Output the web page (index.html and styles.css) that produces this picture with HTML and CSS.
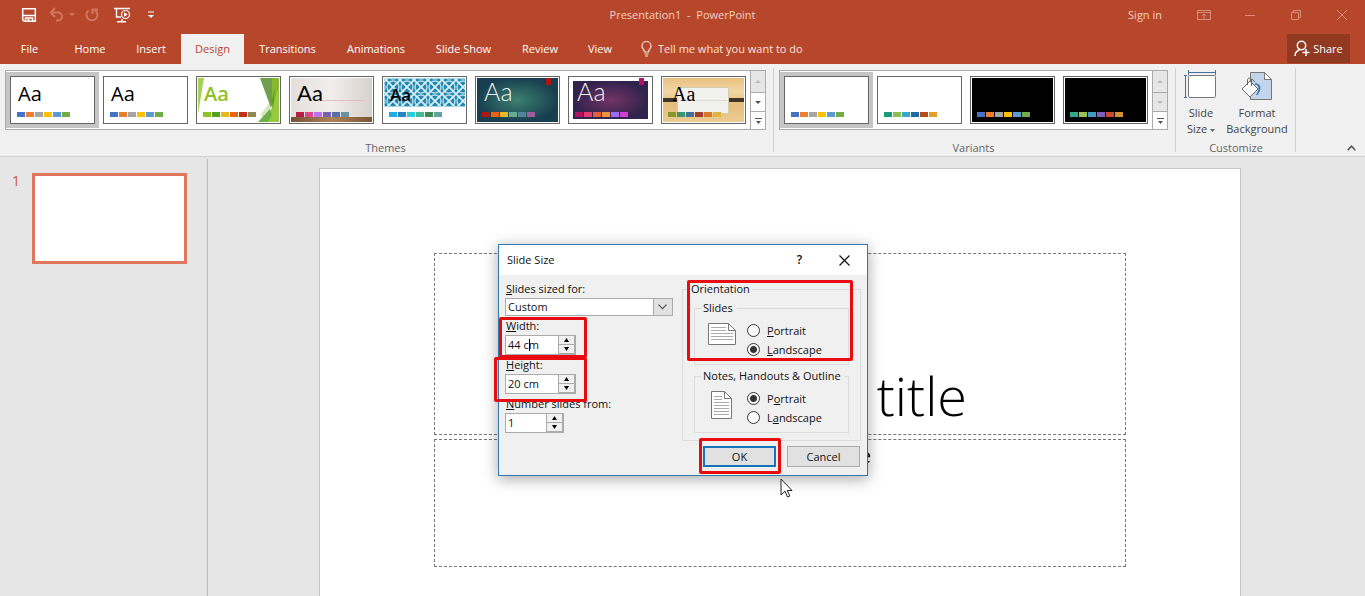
FILE: index.html
```html
<!DOCTYPE html>
<html lang="en">
<head>
<meta charset="utf-8">
<title>Presentation1 - PowerPoint</title>
<link rel="stylesheet" href="styles.css">
</head>
<body>
<header class="titlebar">
  <div class="quick">
    <button class="bar-btn" aria-label="Save"><svg width="16" height="16" viewBox="0 0 16 16"><path d="M1.7 1.7h12.6v12.6H3.2l-1.5-1.5z" fill="none" stroke="#fff" stroke-width="1.5"/><path d="M2 8.500h12M4.500 14v-3h7v3" fill="none" stroke="#fff" stroke-width="1.500"/><path d="M6.500 12h2v2.500h-2z" fill="#fff"/></svg></button>
    <button class="bar-btn" aria-label="Undo"><svg width="26" height="16" viewBox="0 0 26 16"><path d="M2 5.500h7a4 4 0 0 1 0 8H7M6 1 1.800 5.500 6 10" fill="none" stroke="#d3775f" stroke-width="2"/><path d="M20 6h6l-3 3z" fill="#d3775f"/></svg></button>
    <button class="bar-btn" aria-label="Repeat"><svg width="16" height="16" viewBox="0 0 16 16"><path d="M4.500 3.500A5.500 5.500 0 1 0 11 3.200M8.500 7V2.500H14" fill="none" stroke="#d3775f" stroke-width="2"/></svg></button>
    <button class="bar-btn" aria-label="Start from beginning"><svg width="18" height="16" viewBox="0 0 18 16"><path d="M0 1.500h16M2.500 2v8H7M8 12v2.500M3 14.800h9" fill="none" stroke="#fff" stroke-width="1.400"/><circle cx="11.500" cy="7.500" r="4" fill="#b7472a" stroke="#fff" stroke-width="1.200"/><path d="M10 5.200v4.600l3.700-2.300z" fill="#fff"/></svg></button>
    <button class="bar-btn" aria-label="Customize toolbar"><svg width="6" height="8" viewBox="0 0 6 8"><path d="M0 1h6" stroke="#fff"/><path d="M0 4h6L3 7z" fill="#fff"/></svg></button>
  </div>
  <div class="doc-title">Presentation1&nbsp; -&nbsp; PowerPoint</div>
  <div class="window-tools">
    <button class="bar-btn signin">Sign in</button>
    <button class="bar-btn win" aria-label="Ribbon display options"><svg width="14" height="12" viewBox="0 0 14 12"><path d="M.5 1.500h13v9H.5zM.5 3.500h13M7 10V5M4.800 7 7 5l2.200 2" fill="none" stroke="#d98e79"/></svg></button>
    <button class="bar-btn win" aria-label="Minimize"><svg width="12" height="12" viewBox="0 0 12 12"><path d="M1 6.500h10" stroke="#d98e79"/></svg></button>
    <button class="bar-btn win" aria-label="Restore"><svg width="12" height="12" viewBox="0 0 12 12"><path d="M1.500 3.500h7v7h-7zM3.500 3V1.500h7v7H9" fill="none" stroke="#d98e79"/></svg></button>
    <button class="bar-btn win" aria-label="Close"><svg width="12" height="12" viewBox="0 0 12 12"><path d="m1 1 10 10M11 1 1 11" stroke="#d98e79"/></svg></button>
  </div>
</header>
<nav class="tabs">
  <button class="tab file">File</button>
  <button class="tab">Home</button>
  <button class="tab">Insert</button>
  <button class="tab active">Design</button>
  <button class="tab">Transitions</button>
  <button class="tab">Animations</button>
  <button class="tab">Slide Show</button>
  <button class="tab">Review</button>
  <button class="tab">View</button>
  <button class="tab tell"><svg width="11" height="16" viewBox="0 0 11 16"><path d="M3.500 11C3.500 8.500 1 8 1 5a4.500 4.500 0 0 1 9 0c0 3-2.500 3.500-2.500 6zM3.500 13h4M4 15h3" fill="none" stroke="#fbe3dc" stroke-width="1.200"/></svg>Tell me what you want to do</button>
  <button class="share"><svg width="16" height="17" viewBox="0 0 16 17"><circle cx="7.500" cy="5.500" r="4.200" fill="none" stroke="#fff" stroke-width="1.500"/><path d="M1 16c0-3.500 2-5.500 5-6.500M12 9v7M8.500 12.500h7" fill="none" stroke="#fff" stroke-width="1.500"/></svg>Share</button>
</nav>

<section class="ribbon">
  <div class="group">
    <div class="gallery">
      <button class="item selected" aria-label="Office Theme"><svg class="thumb" viewBox="0 0 85 48"><rect class="frame" x=".5" y=".5" width="84" height="47"/><text class="aa" x="8" y="25">Aa</text><path fill="#4472c4" d="M7 36h8v5H7z"/><path fill="#ed7d31" d="M16 36h8v5h-8z"/><path fill="#a5a5a5" d="M25 36h8v5h-8z"/><path fill="#ffc000" d="M34 36h8v5h-8z"/><path fill="#5b9bd5" d="M43 36h8v5h-8z"/><path fill="#70ad47" d="M52 36h8v5h-8z"/></svg></button>
      <button class="item" aria-label="Office Theme 2"><svg class="thumb" viewBox="0 0 85 48"><rect class="frame" x=".5" y=".5" width="84" height="47"/><text class="aa" x="8" y="25">Aa</text><path fill="#4472c4" d="M7 36h8v5H7z"/><path fill="#ed7d31" d="M16 36h8v5h-8z"/><path fill="#a5a5a5" d="M25 36h8v5h-8z"/><path fill="#ffc000" d="M34 36h8v5h-8z"/><path fill="#5b9bd5" d="M43 36h8v5h-8z"/><path fill="#70ad47" d="M52 36h8v5h-8z"/></svg></button>
      <button class="item" aria-label="Facet"><svg class="thumb" viewBox="0 0 85 48"><rect class="frame" x=".5" y=".5" width="84" height="47"/><path fill="#a5cf57" d="M2 2h6L2 38z"/><path fill="#d5e6b8" d="m75 25-10 13 3 8 6-6z"/><path fill="#6f9f4d" d="M64 2h13l3 16-5 14z"/><path fill="#86b92f" d="M76 2h7v24l-7 6z"/><path fill="#99c93c" d="M83 10v36H66l10-14z"/><path fill="#6db04b" d="m62 46 12-13 2 6-4 7z"/><path fill="#579b2f" d="m76 24 3-12-2 22z"/><text class="aa strong" fill="#90c226" x="8" y="25">Aa</text><path fill="#90c226" d="M7 36h8v5H7z"/><path fill="#54a021" d="M16 36h8v5h-8z"/><path fill="#e6b91e" d="M25 36h8v5h-8z"/><path fill="#e76618" d="M34 36h8v5h-8z"/><path fill="#c42f1a" d="M43 36h8v5h-8z"/><path fill="#918655" d="M52 36h8v5h-8z"/></svg></button>
      <button class="item" aria-label="Gallery"><svg class="thumb" viewBox="0 0 85 48"><defs><linearGradient id="wall"><stop stop-color="#e5dfdc"/><stop offset=".5" stop-color="#f1eeec"/><stop offset="1" stop-color="#d8d0cc"/></linearGradient><linearGradient id="floor"><stop stop-color="#765134"/><stop offset=".5" stop-color="#ad8355"/><stop offset="1" stop-color="#795636"/></linearGradient></defs><rect class="frame" x=".5" y=".5" width="84" height="47"/><path fill="url(#wall)" d="M2 2h81v39H2z"/><path fill="url(#floor)" d="M2 41h81v5H2z"/><path stroke="#e4bfc4" d="M31 24.500h45"/><text class="aa lato" x="8" y="25">Aa</text><path fill="#b71e42" d="M7 36h8v5H7z"/><path fill="#de478e" d="M16 36h8v5h-8z"/><path fill="#bc72f0" d="M25 36h8v5h-8z"/><path fill="#795faf" d="M34 36h8v5h-8z"/><path fill="#586ea6" d="M43 36h8v5h-8z"/><path fill="#6892a0" d="M52 36h8v5h-8z"/></svg></button>
      <button class="item" aria-label="Integral"><svg class="thumb" viewBox="0 0 85 48"><defs><pattern id="rings" width="14" height="14" patternUnits="userSpaceOnUse" x="4" y="4"><path fill="#1f87b1" d="M0 0h14v14H0z"/><circle cx="7" cy="7" r="6" fill="none" stroke="#b5dcea" stroke-width="1.500"/><path fill="none" stroke="#d8eef5" stroke-width="1.800" d="m0 0 14 14M14 0 0 14"/></pattern></defs><rect class="frame" x=".5" y=".5" width="84" height="47"/><path fill="url(#rings)" d="M2 2h81v29H2z"/><text class="aa narrow-aa" x="8" y="25">Aa</text><path fill="#1cade4" d="M7 36h8v5H7z"/><path fill="#2683c6" d="M16 36h8v5h-8z"/><path fill="#27ced7" d="M25 36h8v5h-8z"/><path fill="#42ba97" d="M34 36h8v5h-8z"/><path fill="#3e8853" d="M43 36h8v5h-8z"/><path fill="#62a39f" d="M52 36h8v5h-8z"/></svg></button>
      <button class="item" aria-label="Ion"><svg class="thumb" viewBox="0 0 85 48"><defs><radialGradient id="teal"><stop stop-color="#3d806f"/><stop offset="1" stop-color="#183f50"/></radialGradient></defs><rect class="frame" x=".5" y=".5" width="84" height="47"/><path fill="url(#teal)" d="M2 2h81v44H2z"/><path fill="#b01513" d="M71 2h5v7h-5z"/><text class="aa lato white" x="9" y="25">Aa</text><path fill="#b01513" d="M7 36h8v5H7z"/><path fill="#ea6312" d="M16 36h8v5h-8z"/><path fill="#e6b729" d="M25 36h8v5h-8z"/><path fill="#6aac90" d="M34 36h8v5h-8z"/><path fill="#54849a" d="M43 36h8v5h-8z"/><path fill="#9e5e9b" d="M52 36h8v5h-8z"/></svg></button>
      <button class="item" aria-label="Ion Boardroom"><svg class="thumb" viewBox="0 0 85 48"><defs><radialGradient id="plum"><stop stop-color="#743365"/><stop offset="1" stop-color="#30234d"/></radialGradient></defs><rect class="frame" x=".5" y=".5" width="84" height="47"/><path fill="url(#plum)" d="M5 5h75v38H5z"/><path fill="#b31166" d="M71 2h5v7h-5z"/><text class="aa lato white" x="9" y="25">Aa</text><path fill="#b31166" d="M7 36h8v5H7z"/><path fill="#e33d6f" d="M16 36h8v5h-8z"/><path fill="#e45f3c" d="M25 36h8v5h-8z"/><path fill="#e9943a" d="M34 36h8v5h-8z"/><path fill="#9b6bf2" d="M43 36h8v5h-8z"/><path fill="#d53dd0" d="M52 36h8v5h-8z"/></svg></button>
      <button class="item" aria-label="Organic"><svg class="thumb" viewBox="0 0 85 48"><defs><linearGradient id="wood" x2="0" y2="1"><stop stop-color="#e8c081"/><stop offset=".3" stop-color="#f2d6a3"/><stop offset=".6" stop-color="#e6bd7c"/><stop offset="1" stop-color="#eccb92"/></linearGradient></defs><rect class="frame" x=".5" y=".5" width="84" height="47"/><path fill="url(#wood)" d="M2 2h81v44H2z"/><path fill="#403527" d="M2 22h16v4H2zM67 22h16v4H67z"/><path fill="#f1f1ee" stroke="#d5cdb0" d="M16.500 11.500h51v26h-51z"/><path stroke="#dcdccd" d="M35 24.500h31"/><text class="aa serif" x="11" y="25">Aa</text><path fill="#83992a" d="M7 36h8v5H7z"/><path fill="#3c9770" d="M16 36h8v5h-8z"/><path fill="#44709d" d="M25 36h8v5h-8z"/><path fill="#a23c33" d="M34 36h8v5h-8z"/><path fill="#d97828" d="M43 36h8v5h-8z"/><path fill="#deb340" d="M52 36h8v5h-8z"/></svg></button>
      <div class="scroller">
        <button class="off" aria-label="Previous themes"><svg width="6" height="3" viewBox="0 0 6 3"><path d="M0 3h6L3 0z"/></svg></button>
        <button aria-label="Next themes"><svg width="6" height="3" viewBox="0 0 6 3"><path d="M0 0h6L3 3z"/></svg></button>
        <button aria-label="More themes"><svg width="7" height="6" viewBox="0 0 7 6"><path d="M0 0h7v1H0zM1 3h5L3.500 6z"/></svg></button>
      </div>
    </div>
    <div class="group-name">Themes</div>
  </div>
  <div class="group">
    <div class="gallery">
      <button class="item selected" aria-label="Variant 1"><svg class="thumb" viewBox="0 0 85 48"><rect class="frame" x=".5" y=".5" width="84" height="47"/><path fill="#4472c4" d="M7 36h8v5H7z"/><path fill="#ed7d31" d="M16 36h8v5h-8z"/><path fill="#a5a5a5" d="M25 36h8v5h-8z"/><path fill="#ffc000" d="M34 36h8v5h-8z"/><path fill="#5b9bd5" d="M43 36h8v5h-8z"/><path fill="#70ad47" d="M52 36h8v5h-8z"/></svg></button>
      <button class="item" aria-label="Variant 2"><svg class="thumb" viewBox="0 0 85 48"><rect class="frame" x=".5" y=".5" width="84" height="47"/><path fill="#1b9b78" d="M7 36h8v5H7z"/><path fill="#8ebe4c" d="M16 36h8v5h-8z"/><path fill="#38abcb" d="M25 36h8v5h-8z"/><path fill="#1f6ca5" d="M34 36h8v5h-8z"/><path fill="#b44e1c" d="M43 36h8v5h-8z"/><path fill="#ea9d24" d="M52 36h8v5h-8z"/></svg></button>
      <button class="item" aria-label="Variant 3"><svg class="thumb" viewBox="0 0 85 48"><rect class="frame" x=".5" y=".5" width="84" height="47"/><path d="M2 2h81v44H2z"/><path fill="#4472c4" d="M7 36h8v5H7z"/><path fill="#ed7d31" d="M16 36h8v5h-8z"/><path fill="#a5a5a5" d="M25 36h8v5h-8z"/><path fill="#ffc000" d="M34 36h8v5h-8z"/><path fill="#5b9bd5" d="M43 36h8v5h-8z"/><path fill="#70ad47" d="M52 36h8v5h-8z"/></svg></button>
      <button class="item" aria-label="Variant 4"><svg class="thumb" viewBox="0 0 85 48"><rect class="frame" x=".5" y=".5" width="84" height="47"/><path d="M2 2h81v44H2z"/><path fill="#2fab8c" d="M7 36h8v5H7z"/><path fill="#9bc054" d="M16 36h8v5h-8z"/><path fill="#409acb" d="M25 36h8v5h-8z"/><path fill="#7a60c0" d="M34 36h8v5h-8z"/><path fill="#ca4a30" d="M43 36h8v5h-8z"/><path fill="#d39035" d="M52 36h8v5h-8z"/></svg></button>
      <div class="scroller">
        <button class="off" aria-label="Previous variants"><svg width="6" height="3" viewBox="0 0 6 3"><path d="M0 3h6L3 0z"/></svg></button>
        <button class="off" aria-label="Next variants"><svg width="6" height="3" viewBox="0 0 6 3"><path d="M0 0h6L3 3z"/></svg></button>
        <button aria-label="More variants"><svg width="7" height="6" viewBox="0 0 7 6"><path d="M0 0h7v1H0zM1 3h5L3.500 6z"/></svg></button>
      </div>
    </div>
    <div class="group-name">Variants</div>
  </div>
  <div class="group customize">
    <div class="commands">
      <button class="command"><svg width="34" height="32" viewBox="0 0 34 32"><path d="M5 2.500h27M4.500 0v5M31.500 0v5M1.500 5v23M0 5.500h3M0 27.500h3" fill="none" stroke="#41719c"/><rect x="4.500" y="5.500" width="27" height="22" rx="1" fill="#fff" stroke="#777"/></svg><span>Slide<br>Size <svg width="5" height="3" viewBox="0 0 5 3"><path fill="#666" d="M0 0h5L2.500 3z"/></svg></span></button>
      <button class="command"><svg width="32" height="32" viewBox="0 0 32 32"><path d="M9.500 2.500h14l7 7v20h-21z" fill="#c3d5ea" stroke="#777"/><path d="M23.500 2.500v7h7z" fill="#fff" stroke="#777"/><path d="m1 19 8-8 8 8-8 8z" fill="#fff" stroke="#666"/><path d="M6.500 15v-5c0-2.500 4-2.500 4 0v6M9 11l2-2 3 3" fill="none" stroke="#666"/><path d="M14 14c5 0 5 6 1.500 11 5-5 4.500-12-1.500-11z" fill="#3573b1" stroke="#3573b1"/></svg><span>Format<br>Background</span></button>
    </div>
    <div class="group-name">Customize</div>
  </div>
  <button class="collapse" aria-label="Collapse the ribbon"><svg width="9" height="6" viewBox="0 0 9 6"><path d="m.7 5.200 3.800-4 3.800 4" fill="none" stroke="#555" stroke-width="1.500"/></svg></button>
</section>

<main class="workspace">
  <aside class="slides-pane">
    <span class="number">1</span>
    <div class="slide-thumb"></div>
  </aside>
  <div class="stage">
    <div class="slide">
      <div class="placeholder title-box" aria-label="Click to add title">title</div>
      <div class="placeholder sub-box" aria-label="Click to add subtitle">e</div>
    </div>
  </div>
</main>

<form class="dialog" role="dialog" aria-label="Slide Size">
  <div class="dialog-head">
    <span class="dialog-title">Slide Size</span>
    <button type="button" class="head-btn" aria-label="Help"><span>?</span></button>
    <button type="button" class="head-btn" aria-label="Close"><svg width="11" height="11" viewBox="0 0 11 11"><path d="m.5.5 10 10M10.500.5l-10 10" stroke="#111" stroke-width="1.200"/></svg></button>
  </div>
  <div class="dialog-body">
    <div class="fields">
      <label for="size"><u>S</u>lides sized for:</label>
      <div class="combo"><select id="size"><option>Custom</option></select><svg width="9" height="6" viewBox="0 0 9 6"><path d="m.5.700 4 4 4-4" fill="none" stroke="#555" stroke-width="1.200"/></svg></div>
      <label for="w"><u>W</u>idth:</label>
      <div class="spin"><input id="w" type="text" value="44 cm"><span class="steps"><button type="button" aria-label="Increase width"><svg width="7" height="4" viewBox="0 0 7 4"><path d="M1 4h5L3.500 0z"/></svg></button><button type="button" aria-label="Decrease width"><svg width="7" height="4" viewBox="0 0 7 4"><path d="M1 0h5L3.500 4z"/></svg></button></span><i class="caret"></i></div>
      <label for="h"><u>H</u>eight:</label>
      <div class="spin"><input id="h" type="text" value="20 cm"><span class="steps"><button type="button" aria-label="Increase height"><svg width="7" height="4" viewBox="0 0 7 4"><path d="M1 4h5L3.500 0z"/></svg></button><button type="button" aria-label="Decrease height"><svg width="7" height="4" viewBox="0 0 7 4"><path d="M1 0h5L3.500 4z"/></svg></button></span></div>
      <label for="n"><u>N</u>umber slides from:</label>
      <div class="spin narrow"><input id="n" type="text" value="1"><span class="steps"><button type="button" aria-label="Increase first number"><svg width="7" height="4" viewBox="0 0 7 4"><path d="M1 4h5L3.500 0z"/></svg></button><button type="button" aria-label="Decrease first number"><svg width="7" height="4" viewBox="0 0 7 4"><path d="M1 0h5L3.500 4z"/></svg></button></span></div>
    </div>
    <div class="options">
      <fieldset class="outer">
        <legend>Orientation</legend>
        <fieldset class="inner">
          <legend>Slides</legend>
          <div class="choice">
            <svg width="28" height="22" viewBox="0 0 28 22"><path d="M.5.500h20l7 7v14H.5z" fill="#fff" stroke="#777"/><path d="M20.500.500v7h7" fill="none" stroke="#777"/><path d="M3 4.500h15M3 7.500h15M3 10.500h22M3 13.500h22M3 16.500h22" stroke="#aaa"/></svg>
            <div class="radios"><label><input type="radio" name="slides"><span><u>P</u>ortrait</span></label><label><input type="radio" name="slides" checked><span><u>L</u>andscape</span></label></div>
          </div>
        </fieldset>
        <fieldset class="inner">
          <legend>Notes, Handouts &amp; Outline</legend>
          <div class="choice">
            <svg width="28" height="28" viewBox="0 0 28 28"><path d="M3.500.500h13l7 7v20h-20z" fill="#fff" stroke="#777"/><path d="M16.500.500v7h7" fill="none" stroke="#777"/><path d="M6 5.500h8M6 8.500h8M6 11.500h15M6 14.500h15M6 17.500h15M6 20.500h15M6 23.500h15" stroke="#aaa"/></svg>
            <div class="radios"><label><input type="radio" name="notes" checked><span>P<u>o</u>rtrait</span></label><label><input type="radio" name="notes"><span>L<u>a</u>ndscape</span></label></div>
          </div>
        </fieldset>
      </fieldset>
      <div class="actions"><button type="button" class="push primary">OK</button><button type="button" class="push">Cancel</button></div>
    </div>
  </div>
  <i class="mark mark-width"></i>
  <i class="mark mark-height"></i>
  <i class="mark mark-orientation"></i>
  <i class="mark mark-ok"></i>
  <svg class="pointer" width="13" height="20" viewBox="0 0 13 20"><path d="M1 1v16l4-3.800 2.500 5.800 2.300-1-2.500-5.500H12z" fill="#fff" stroke="#222"/></svg>
</form>
</body>
</html>
```
FILE: styles.css
```css
* { box-sizing: border-box; }
html, body { height: 100%; }
body {
  margin: 0;
  display: flex;
  flex-direction: column;
  position: relative;
  overflow: hidden;
  background: #e6e6e6;
  color: #444;
  font: 11px/16px "Open Sans", "Noto Sans", sans-serif;
}
button, input, select { font: inherit; color: inherit; margin: 0; padding: 0; border: 0; background: none; }
svg { display: block; flex: none; }

.titlebar {
  display: grid;
  grid-template-columns: 1fr auto 1fr;
  align-items: center;
  height: 34px;
  padding-bottom: 5px;
  background: #b7472a;
  color: #f6cfc3;
}
.quick { display: flex; align-items: center; gap: 12px; padding-left: 21px; }
.bar-btn { display: flex; align-items: center; justify-content: center; }
.quick .bar-btn:nth-child(2) { margin-right: -3px; }
.quick .bar-btn:nth-child(4) { margin: 0 4px 0 2px; }
.window-tools { display: flex; justify-content: flex-end; }
.signin { margin-right: 19px; }
.win { width: 46px; }

.tabs {
  display: grid;
  grid-template-columns: 59px 62px 60px 63px 87px 90px 85px 68px 52px auto 1fr;
  height: 30px;
  background: #b7472a;
  color: #fff;
}
.tab { white-space: nowrap; }
.active { background: #f1f1f1; color: #b7472a; }
.tell { display: flex; align-items: center; gap: 6px; padding-left: 15px; color: #fbe3dc; }
.share {
  justify-self: end;
  display: flex;
  align-items: center;
  justify-content: center;
  gap: 3px;
  width: 63px;
  margin: 0 15px 1px 0;
  background: #923922;
}

.ribbon {
  display: flex;
  height: 93px;
  border-bottom: 1px solid #d2d2d2;
  background: #f1f1f1;
}
.group {
  display: flex;
  flex-direction: column;
  justify-content: space-between;
  padding: 6px 8px 0 5px;
  position: relative;
}
.group::after {
  content: "";
  position: absolute;
  right: 0;
  top: 4px;
  bottom: 4px;
  border-right: 1px solid #d0d0d0;
}
.group-name { text-align: center; color: #666; }
.gallery { display: flex; height: 60px; border: 1px solid #ababab; background: #fff; }
.item { margin: 1px 0; padding: 4px; }
.selected { background: #c5c5c5; }
.thumb { width: 85px; height: 48px; }
.frame { fill: #fff; stroke: #666; }
.aa { font-family: "Open Sans", sans-serif; font-size: 20px; }
.strong { font-weight: 600; }
.narrow-aa { font-size: 17px; font-weight: 600; }
.lato { font-family: Lato, sans-serif; font-size: 22px; }
.white { fill: #eef3f2; font-size: 25px; font-weight: 300; }
.serif { font-family: "Liberation Serif", serif; }
.scroller { display: grid; grid-template-rows: 21px 19px 18px; width: 15px; border-left: 1px solid #ababab; }
.scroller button { display: flex; align-items: center; justify-content: center; fill: #555; }
.scroller button + button { border-top: 1px solid #ababab; }
.scroller .off { background: #e6e6e6; fill: #bbb; }
.customize { width: 120px; padding: 6px 0 0; }
.commands { display: grid; grid-template-columns: 50px 62px; }
.command { display: flex; flex-direction: column; align-items: center; gap: 3px; white-space: nowrap; }
.command span svg { display: inline-block; vertical-align: middle; }
.collapse { margin-left: auto; align-self: flex-end; padding: 0 9px 5px 0; }

.workspace { display: flex; flex: 1; min-height: 0; }
.slides-pane { display: flex; gap: 11px; width: 208px; padding: 14px 20px 0 12px; margin-top: 2px; border-right: 1px solid #bababa; }
.number { width: 9px; color: #c55a41; font-size: 14px; }
.slide-thumb { flex: 1; height: 91px; border: 3px solid #e0765b; background: #fff; }
.stage { flex: 1; display: flex; padding: 11px 124px 0 111px; overflow: hidden; }
.slide { flex: 1; height: 518px; padding: 84px 114px 0; border: 1px solid #c6c6c6; background: #fff; color: #000; }
.placeholder { border: 1px dashed #777; text-align: right; }
.title-box { display: flex; align-items: flex-end; justify-content: flex-end; height: 182px; margin-bottom: 4px; padding: 0 158px 4px 0; font-size: 54px; line-height: 70px; font-weight: 300; }
.sub-box { height: 128px; padding: 4px 254px 0 0; font-size: 20px; line-height: 24px; }

.dialog {
  position: absolute;
  left: 498px;
  top: 244px;
  width: 370px;
  border: 1px solid #2f79ad;
  background: #f0f0f0;
  color: #111;
  box-shadow: 0 3px 14px rgba(0, 0, 0, .35);
}
.dialog-head { display: flex; align-items: center; height: 30px; padding-left: 8px; background: #fff; }
.dialog-title { flex: 1; }
.head-btn { display: flex; align-items: center; justify-content: center; width: 45px; height: 28px; font-size: 12px; font-weight: 600; }
.dialog-body { display: flex; justify-content: space-between; padding: 5px 6px 8px; }
.fields { width: 168px; }
.fields label { display: block; height: 18px; padding-left: 1px; line-height: 18px; white-space: nowrap; }
.combo { display: grid; align-items: center; height: 18px; margin-bottom: 1px; border: 1px solid #ababab; background: #fff; }
.combo select { grid-area: 1 / 1; width: 100%; height: 16px; padding-left: 2px; appearance: none; background: linear-gradient(90deg, #ababab 1px, #e1e1e1 1px) right / 19px 100% no-repeat; }
.combo svg { grid-area: 1 / 1; justify-self: end; margin-right: 5px; pointer-events: none; }
.spin { display: flex; position: relative; width: 71px; height: 20px; margin-bottom: 1px; border: 1px solid #ababab; background: #fff; }
.narrow { width: 59px; }
.spin input { flex: 1; min-width: 0; padding-left: 2px; outline: 0; }
.steps { display: grid; grid-template-rows: 1fr 1fr; width: 17px; background: #ababab; gap: 1px; padding: 0 1px 1px; }
.steps button { display: flex; align-items: center; justify-content: center; background: #f0f0f0; }
.caret { position: absolute; left: 23px; top: 3px; width: 1px; height: 12px; background: #000; }
.options { display: flex; flex-direction: column; width: 179px; padding-top: 1px; }
fieldset { min-width: 0; margin: 0; border: 1px solid #dcdcdc; }
legend { height: 16px; padding: 0 2px; white-space: nowrap; }
.outer { padding: 3px 11px 7px; height: 160px; }
.outer > legend { margin-left: -5px; }
.inner { height: 65px; padding: 0 6px; margin-bottom: 3px; }
.inner > legend { padding: 0 4px 0 2px; }
.choice { display: grid; grid-template-columns: 28px 1fr; gap: 11px; align-items: start; padding: 5px 0 0 7px; }
.choice > svg { margin-top: 2px; }
.radios label { display: flex; align-items: center; gap: 7px; height: 19px; }
.radios input { appearance: none; width: 13px; height: 13px; border: 1px solid #333; border-radius: 50%; background: #fff; }
.radios input:checked { background: radial-gradient(circle, #333 0 3px, #fff 4px); }
.actions { display: flex; gap: 11px; justify-content: flex-end; padding: 5px 1px 0 0; }
.push { width: 73px; height: 21px; border: 1px solid #ababab; background: #e1e1e1; }
.primary { border: 2px solid #1674bd; }

.mark { position: absolute; border: 3px solid #e80c0f; border-radius: 2px; pointer-events: none; }
.mark-width { left: 0; top: 72px; width: 88px; height: 41px; }
.mark-height { left: -5px; top: 112px; width: 93px; height: 45px; }
.mark-orientation { left: 188px; top: 35px; width: 166px; height: 81px; }
.mark-ok { left: 200px; top: 193px; width: 82px; height: 36px; }
.pointer { position: absolute; left: 281px; top: 233px; }
```
